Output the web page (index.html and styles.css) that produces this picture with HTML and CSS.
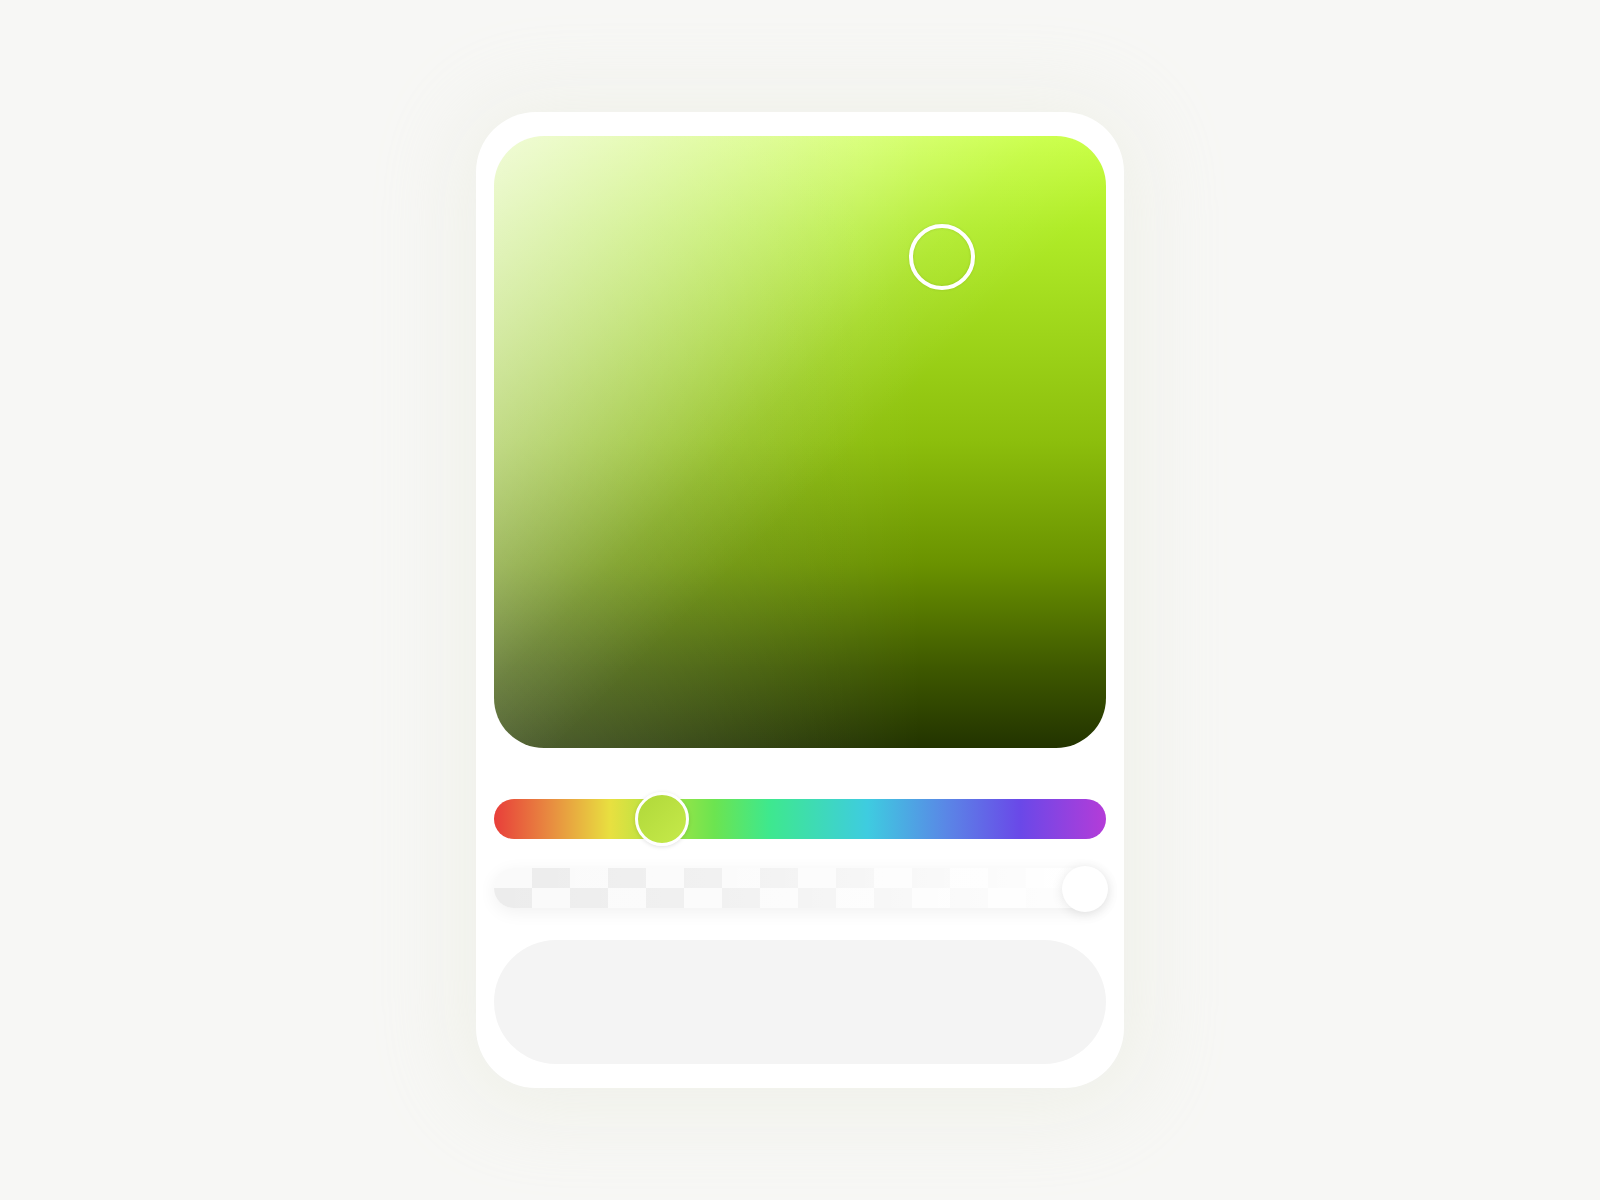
FILE: index.html
```
<!DOCTYPE html>
<html>
<head>
<meta charset="utf-8"/>
<meta name="viewport" content="width=device-width, initial-scale=1.0"/>
<link rel="stylesheet" href="styles.css">
<title>Color picker</title>
</head>
<body>

<div class="cpick">

<div class="cp-area">
<span class="cp-ring"></span>
</div>

<div class="cp-hue">
<span class="cp-knob"></span>
</div>

<div class="cp-alpha">
<span class="cp-dot"></span>
</div>

<div class="cp-field"></div>

</div>

</body>
</html>
```

FILE: styles.css
```
html,body{margin:0;padding:0;}
body{height:100vh;background:#f7f7f5;display:flex;align-items:center;justify-content:center;
font-family:"Inter","Liberation Sans",sans-serif;}


/** card **/
.cpick{width:612px;padding:24px 18px;background:#fff;border-radius:60px;
display:flex;flex-direction:column;
box-shadow:0 6px 80px 20px rgba(226,230,210,0.3);}


/** saturation / value area **/
.cp-area{position:relative;height:612px;border-radius:50px;
background:
 linear-gradient(135deg,rgba(255,255,255,0.75) 0%,rgba(255,255,255,0.38) 25%,rgba(255,255,255,0.08) 45%,rgba(255,255,255,0) 55%),
 linear-gradient(to right,rgba(255,255,255,0.2) 0%,rgba(255,255,255,0) 70%),
 linear-gradient(to right,rgba(60,110,0,0.12) 0%,rgba(60,110,0,0) 60%),
 linear-gradient(to bottom,#c8ff40 0%,#b0ec28 15%,#8cbe0c 50%,#6a9200 70%,#3e5800 87%,#223300 100%);}
.cp-ring{position:absolute;left:415px;top:88px;width:58px;height:58px;border:4.5px solid #fff;border-radius:50%;
box-shadow:inset 0 0 3px rgba(0,0,0,0.12),0 0 3px rgba(0,0,0,0.1);}


/** hue **/
.cp-hue{position:relative;height:40px;margin-top:51px;border-radius:20px;
background:linear-gradient(to right,#e83e3a 0%,#e88a40 9%,#e8e040 19%,#a6e444 28%,#6ce450 36%,#3ee88e 45%,#3ecce0 61%,#5a86e6 74%,#6a48e8 86%,#b43cd8 100%);}
.cp-knob{position:absolute;left:141px;top:-7px;width:48px;height:48px;border:3px solid #fff;border-radius:50%;
background:linear-gradient(135deg,#b0d83a,#c6ea4a);box-shadow:0 1px 4px rgba(0,0,0,0.12);}


/** alpha **/
.cp-alpha{position:relative;height:40px;margin-top:29px;border-radius:20px;
background:
 linear-gradient(to right,rgba(255,255,255,0) 0%,rgba(255,255,255,0.3) 40%,rgba(255,255,255,0.85) 85%,#fff 100%),
 conic-gradient(#ececec 25%,#fafafa 0 50%,#ececec 0 75%,#fafafa 0) 0 0/76px 40px;
box-shadow:0 4px 18px rgba(0,0,0,0.06);}
.cp-dot{position:absolute;right:-2px;top:-2px;width:46px;height:46px;border-radius:50%;background:#fff;
box-shadow:0 2px 12px rgba(0,0,0,0.1);}


/** value field **/
.cp-field{height:124px;margin-top:32px;border-radius:62px;background:#f4f4f4;}
```
